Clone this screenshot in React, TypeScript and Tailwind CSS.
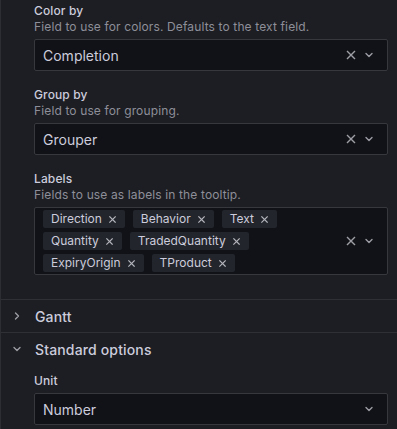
import type { ReactNode } from "react";

const LABELS = ["Direction", "Behavior", "Text", "Quantity", "TradedQuantity", "ExpiryOrigin", "TProduct"];

function TimesIcon({ size = 14 }: { size?: number }) {
  return (
    <svg width={size} height={size} viewBox="0 0 16 16" fill="none" aria-hidden>
      <path d="M4 4l8 8M12 4l-8 8" stroke="currentColor" strokeWidth="1.6" strokeLinecap="square" />
    </svg>
  );
}

function AngleDown() {
  return (
    <svg width="12" height="12" viewBox="0 0 16 16" fill="none" aria-hidden>
      <path d="M4 6l4 4 4-4" stroke="currentColor" strokeWidth="1.8" strokeLinecap="round" strokeLinejoin="round" />
    </svg>
  );
}

function AngleRight() {
  return (
    <svg width="12" height="12" viewBox="0 0 16 16" fill="none" aria-hidden>
      <path d="M6 4l4 4-4 4" stroke="currentColor" strokeWidth="1.8" strokeLinecap="round" strokeLinejoin="round" />
    </svg>
  );
}

function Field({ label, description, children }: { label: string; description?: string; children: ReactNode }) {
  return (
    <div className="mb-4">
      <div className="mb-1 tracking-[0.13px]">
        <div className="text-[12px] leading-4 font-medium text-[#ccccdc]">{label}</div>
        {description ? <div className="text-[12px] leading-4 text-[#8e8e99]">{description}</div> : null}
      </div>
      {children}
    </div>
  );
}

function SelectBox({ value, clearable = true }: { value: string; clearable?: boolean }) {
  return (
    <div className="flex h-8 items-center rounded-[2px] border border-[#36383e] bg-[#111217] pl-2 pr-3">
      <span className="flex-1 truncate text-[14px] text-[#ccccdc]">{value}</span>
      <div className="flex items-center gap-[5px] text-[#9d9ea6]">
        {clearable ? <TimesIcon /> : null}
        <AngleDown />
      </div>
    </div>
  );
}

function MultiSelect({ values }: { values: string[] }) {
  return (
    <div className="flex items-center rounded-[2px] border border-[#36383e] bg-[#111217] py-[2px] pl-2 pr-3">
      <div className="flex flex-1 flex-wrap gap-x-2 gap-y-1 pr-10">
        {values.map((v) => (
          <span
            key={v}
            className="flex h-[18px] items-center gap-[5px] rounded-[2px] bg-[#22252b] pl-2 pr-[7px] text-[12px] text-[#ccccdc]"
          >
            {v}
            <span className="text-[#b4b5bc]">
              <TimesIcon size={11} />
            </span>
          </span>
        ))}
      </div>
      <div className="flex items-center gap-[5px] text-[#9d9ea6]">
        <TimesIcon />
        <AngleDown />
      </div>
    </div>
  );
}

function CategoryHeader({ title, open }: { title: string; open: boolean }) {
  return (
    <div className="flex h-8 items-center text-[#ccccdc]">
      <span className="flex w-[34px] justify-center pr-[3px] text-[#9d9ea6]">{open ? <AngleDown /> : <AngleRight />}</span>
      <span className="text-[14px] font-medium tracking-[0.15px]">{title}</span>
    </div>
  );
}

export default function App() {
  return (
    <div
      className="h-[429px] w-[397px] overflow-hidden border-l border-[#2c2e33] bg-[#1c1e23]"
      style={{ fontFamily: "Inter, 'Noto Sans', sans-serif" }}
    >
      <div className="pt-[3px] pb-2 pl-[33px] pr-[9px]">
        <Field label="Color by" description="Field to use for colors. Defaults to the text field.">
          <SelectBox value="Completion" />
        </Field>
        <Field label="Group by" description="Field to use for grouping.">
          <SelectBox value="Grouper" />
        </Field>
        <Field label="Labels" description="Fields to use as labels in the tooltip.">
          <MultiSelect values={LABELS} />
        </Field>
      </div>
      <div className="border-t border-[#2e3035]">
        <CategoryHeader title="Gantt" open={false} />
      </div>
      <div className="border-t border-[#2e3035]">
        <CategoryHeader title="Standard options" open />
        <div className="pt-2 pl-[33px] pr-[9px]">
          <Field label="Unit">
            <SelectBox value="Number" clearable={false} />
          </Field>
        </div>
      </div>
    </div>
  );
}
